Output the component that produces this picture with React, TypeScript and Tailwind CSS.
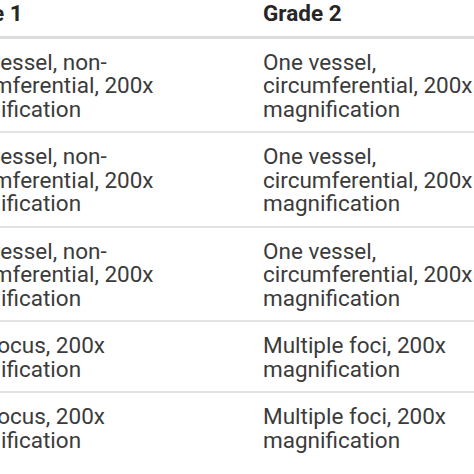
const rows = [
  {
    g1: 'One vessel, non-circumferential, 200x magnification',
    g2: 'One vessel, circumferential, 200x magnification',
  },
  {
    g1: 'One vessel, non-circumferential, 200x magnification',
    g2: 'One vessel, circumferential, 200x magnification',
  },
  {
    g1: 'One vessel, non-circumferential, 200x magnification',
    g2: 'One vessel, circumferential, 200x magnification',
  },
  { g1: 'One focus, 200x magnification', g2: 'Multiple foci, 200x magnification' },
  { g1: 'One focus, 200x magnification', g2: 'Multiple foci, 200x magnification' },
];

export default function App() {
  return (
    <div
      className="w-[474px] h-[474px] overflow-hidden bg-white text-[#3b3b3b]"
      style={{ fontFamily: 'Roboto, "Liberation Sans", sans-serif' }}
    >
      <div className="ml-[-80px] w-[660px]">
        {/* header */}
        <div className="grid grid-cols-[319px_1fr] border-b-[3px] border-[#dcdcdc] pt-[2px] pb-[10px]">
          <div className="px-6 text-[22.5px] leading-[23.5px] font-bold text-[#262626]">Grade 1</div>
          <div className="px-6 text-[22.5px] leading-[23.5px] font-bold text-[#262626]">Grade 2</div>
        </div>

        {rows.map((r, i) => (
          <div
            key={i}
            className={
              i < rows.length - 1
                ? 'grid grid-cols-[319px_1fr] border-b-2 border-[#e2e2e2] pt-3 pb-[10px]'
                : 'grid grid-cols-[319px_1fr] pt-3 pb-[10px]'
            }
          >
            <div className="px-6">
              <p className="w-[232px] text-[22.5px] leading-[23.5px]">{r.g1}</p>
            </div>
            <div className="px-6">
              <p className="w-[232px] text-[22.5px] leading-[23.5px]">{r.g2}</p>
            </div>
          </div>
        ))}
      </div>
    </div>
  );
}
